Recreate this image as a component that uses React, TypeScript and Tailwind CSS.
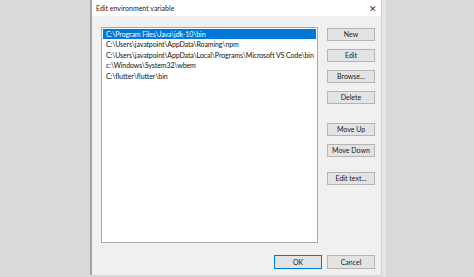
const paths = [
  'C:\\Program Files\\Java\\jdk-10\\bin',
  'C:\\Users\\javatpoint\\AppData\\Roaming\\npm',
  'C:\\Users\\javatpoint\\AppData\\Local\\Programs\\Microsoft VS Code\\bin',
  'c:\\Windows\\System32\\wbem',
  'C:\\flutter\\flutter\\bin',
];

function Btn({ label, className = '' }: { label: string; className?: string }) {
  return (
    <button
      type="button"
      className={`h-[13px] w-[48px] border border-[#b4b4b4] bg-[#e3e3e3] text-[7px] leading-none text-[#1a1a1a] ${className}`}
    >
      {label}
    </button>
  );
}

export default function App() {
  return (
    <div className="flex h-[277px] w-[474px] overflow-hidden bg-[#d9d9d9] font-['Lato',sans-serif]">
      <div className="w-[90px] shrink-0" />

      <div className="flex h-[275px] w-[292px] shrink-0 flex-col border-l-2 border-r border-l-[#a3a3a3] border-r-[#cfcfcf] bg-[#f0f0f0]">
        {/* title bar */}
        <div className="flex h-[16px] items-center justify-between bg-white pl-[4px] pr-[4px]">
          <span className="text-[7px] text-[#1a1a1a]">Edit environment variable</span>
          <span className="text-[9px] leading-none text-[#333]">✕</span>
        </div>

        <div className="flex flex-1 gap-[9px] pl-[9px] pr-[6px] pt-[11px]">
          <div className="h-[216px] w-[217px] border border-[#a8a8a8] bg-white p-[1px]">
            {paths.map((p, i) => (
              <div
                key={p}
                className={`h-[10.4px] whitespace-nowrap pl-[3px] text-[7px] leading-[10.4px] tracking-[-0.1px] ${
                  i === 0 ? 'bg-[#0078d7] text-white' : 'text-[#111]'
                }`}
              >
                {p}
              </div>
            ))}
          </div>

          <div className="flex flex-col pt-[1px]">
            <Btn label="New" />
            <Btn label="Edit" className="mt-[8px]" />
            <Btn label="Browse..." className="mt-[8px]" />
            <Btn label="Delete" className="mt-[8px]" />
            <Btn label="Move Up" className="mt-[19px]" />
            <Btn label="Move Down" className="mt-[8px]" />
            <Btn label="Edit text..." className="mt-[15px]" />
          </div>
        </div>

        <div className="flex justify-end gap-[5px] pb-[6px] pr-[6px]">
          <button
            type="button"
            className="h-[14px] w-[48px] border border-[#0078d7] bg-[#e3e3e3] text-[7px] leading-none text-[#1a1a1a]"
          >
            OK
          </button>
          <Btn label="Cancel" className="h-[14px]" />
        </div>
      </div>

      <div className="flex-1 border-l-4 border-l-[#e6e6e6]" />
    </div>
  );
}
